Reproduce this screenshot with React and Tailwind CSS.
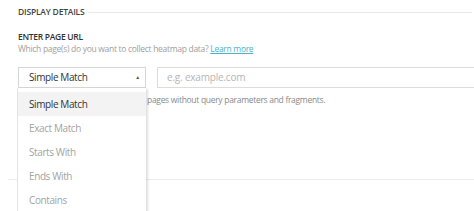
import React from 'react';

const options = ['Simple Match', 'Exact Match', 'Starts With', 'Ends With', 'Contains'];

const App = () => {
  return (
    <div className="relative w-[474px] h-[211px] overflow-hidden bg-white text-[#333] tracking-[-0.3px]" style={{ fontFamily: '"Open Sans", "Liberation Sans", sans-serif' }}>
      <div className="pl-[18px] pt-[5px]">
        {/* section title */}
        <div className="flex items-center h-[14px]">
          <span className="text-[8.5px] font-semibold tracking-[-0.2px] text-[#444]">DISPLAY DETAILS</span>
          <div className="flex-1 h-px bg-[#e8e8e8] ml-[4px] mr-[2px]"></div>
        </div>

        <div className="mt-[11.5px] text-[8.5px] font-semibold text-[#333] leading-[12px]">ENTER PAGE URL</div>
        <div className="mt-[0.5px] text-[8.5px] text-[#a0a0a0] leading-[12px]">
          Which page(s) do you want to collect heatmap data?{' '}
          <a className="text-[#4ab3c9] underline">Learn more</a>
        </div>

        <div className="flex mt-[12px]">
          <div className="w-[128px] h-[21px] border border-[#d6d6d6] bg-white flex items-center justify-between pl-[10px] pr-[5px]">
            <span className="text-[10px] tracking-[-0.4px] text-[#333]">Simple Match</span>
            <span className="text-[5px] text-[#555]">▲</span>
          </div>
          <div className="flex-1 ml-[11px] -mr-[10px] h-[21px] border border-[#dcdcdc] flex items-center pl-[9px]">
            <span className="text-[10px] tracking-[-0.2px] text-[#b5b5b5]">e.g. example.com</span>
          </div>
        </div>

        <div className="mt-[6px] text-[8.5px] text-[#8a8a8a] leading-[12px] whitespace-nowrap">
          <span className="inline-block w-[129px] overflow-hidden align-top">Simple Match collects data on</span>
          pages without query parameters and fragments.
        </div>
      </div>

      <div className="absolute left-[8px] right-0 top-[179px] h-px bg-[#ececec]"></div>

      {/* open dropdown */}
      <div className="absolute left-[17px] top-[88px] w-[129px] pt-[4px] bg-white border-l border-[#e4e4e4] shadow-[2px_1px_2px_rgba(0,0,0,0.12)]">
        {options.map((opt, i) => (
          <div
            key={opt}
            className={`h-[24px] flex items-center pl-[11px] text-[10px] tracking-[-0.4px] ${i === 0 ? 'bg-[#f3f3f3] text-[#333]' : 'text-[#a3a3a3]'}`}
          >
            {opt}
          </div>
        ))}
      </div>
    </div>
  );
};

export default App;
